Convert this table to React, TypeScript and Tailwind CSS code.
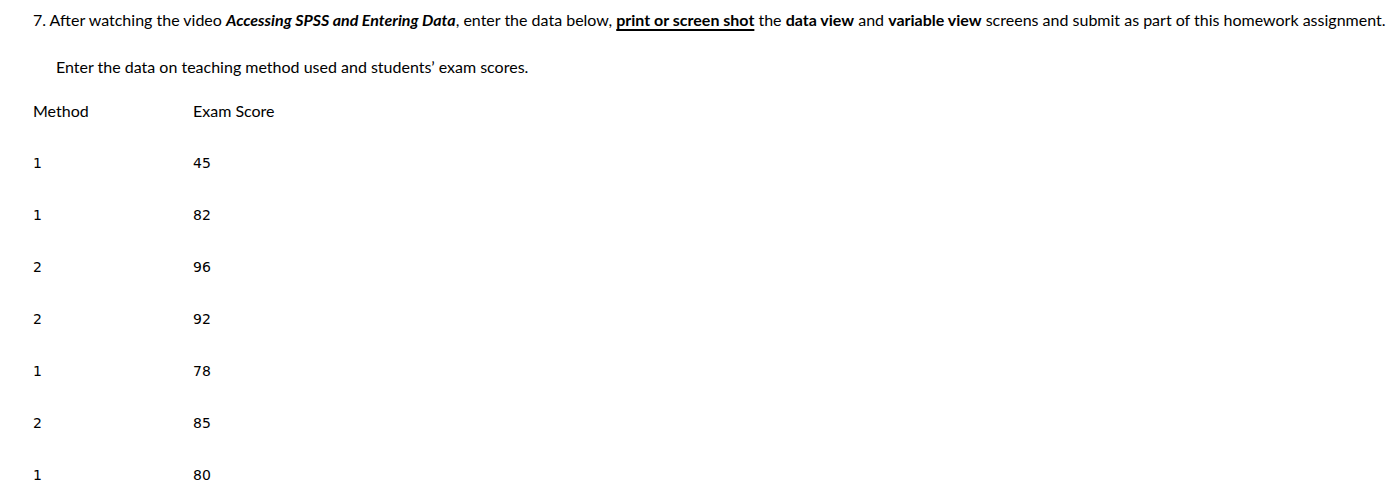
import React from "react";

const rows: [string, string][] = [
  ["1", "45"],
  ["1", "82"],
  ["2", "96"],
  ["2", "92"],
  ["1", "78"],
  ["2", "85"],
  ["1", "80"],
];

export default function App() {
  return (
    <div className="w-[1393px] h-[502px] bg-white text-black overflow-hidden font-['Lato',sans-serif] text-[16px]">
      <div className="pl-[33px] pt-[10px] whitespace-nowrap leading-[20px]">
        7. After watching the video <b><i>Accessing SPSS and Entering Data</i></b>, enter the data below,{" "}
        <b className="underline decoration-[1.5px] underline-offset-[3px]">print or screen shot</b> the <b>data view</b> and <b>variable view</b> screens and submit as part of this homework assignment.
      </div>
      <div className="pl-[56px] mt-[27px] leading-[20px]">
        Enter the data on teaching method used and students’ exam scores.
      </div>
      <div className="pl-[33px] mt-[24px] flex leading-[20px]">
        <div className="w-[160px]">Method</div>
        <div>Exam Score</div>
      </div>
      <div className="pl-[33px] mt-[32px] flex flex-col gap-[32px] font-['DejaVu_Sans',sans-serif] text-[14px]">
        {rows.map(([m, s], i) => (
          <div key={i} className="flex leading-[20px]">
            <div className="w-[160px]">{m}</div>
            <div>{s}</div>
          </div>
        ))}
      </div>
    </div>
  );
}
